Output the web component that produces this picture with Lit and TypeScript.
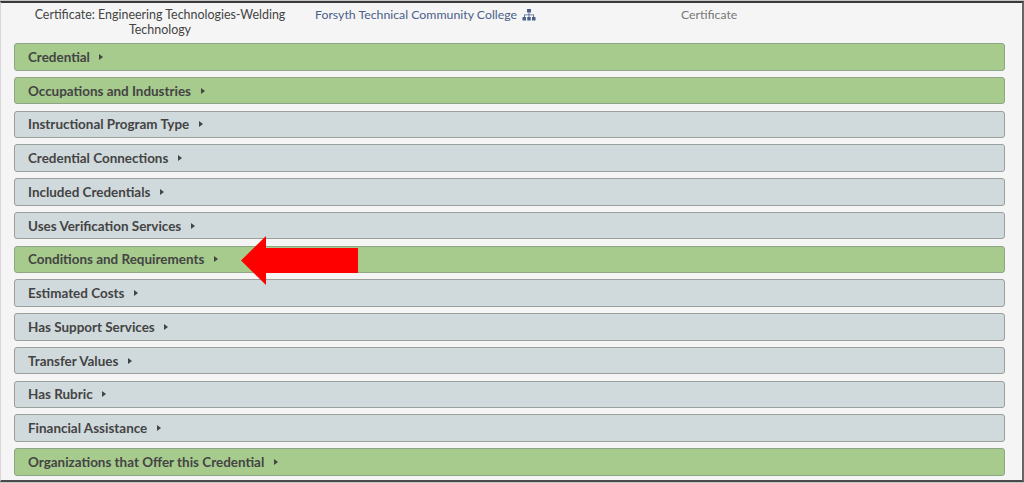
import { LitElement, html, css, svg } from "lit";
import { customElement } from "lit/decorators.js";

const rows: [string, boolean][] = [
  ["Credential", true],
  ["Occupations and Industries", true],
  ["Instructional Program Type", false],
  ["Credential Connections", false],
  ["Included Credentials", false],
  ["Uses Verification Services", false],
  ["Conditions and Requirements", true],
  ["Estimated Costs", false],
  ["Has Support Services", false],
  ["Transfer Values", false],
  ["Has Rubric", false],
  ["Financial Assistance", false],
  ["Organizations that Offer this Credential", true],
];

@customElement("app-root")
export class AppRoot extends LitElement {
  static styles = css`
    :host {
      display: block;
      width: 1024px;
      height: 483px;
      overflow: hidden;
      background: #c4c4c4;
      padding-top: 1px;
      box-sizing: border-box;
      font-family: Lato, "Noto Sans", sans-serif;
    }
    .frame {
      box-sizing: border-box;
      position: relative;
      width: 1024px;
      height: 481px;
      background: #f5f5f5;
      border-top: 2.5px solid #3a3a3a;
      border-bottom: 2px solid #4a4a4a;
      border-left: 1px solid #d8d8d8;
      border-right: 2px solid #666;
      padding: 0 17px 0 13px;
      display: flex;
      flex-direction: column;
    }
    .head {
      display: grid;
      grid-template-columns: 292px 333px 1fr;
      height: 40.2px;
      font-size: 12.3px;
      line-height: 15px;
      padding-top: 3.5px;
      box-sizing: border-box;
    }
    .title { color: #444; text-align: center; padding: 0 10px; font-size: 12.45px; }
    .org { color: #4a5f8a; padding-left: 9px; display: flex; gap: 5px; align-items: flex-start; }
    .org svg { margin-top: 2px; }
    .kind { color: #777; padding-left: 42px; font-size: 12.25px; }
    .rows { display: flex; flex-direction: column; gap: 6.25px; }
    .row {
      box-sizing: border-box;
      height: 27.5px;
      border: 1px solid #9a9f9c;
      border-radius: 3px;
      padding-left: 13px;
      display: flex;
      align-items: center;
      gap: 9.5px;
      font-size: 13.45px;
      font-weight: 700;
      color: #444;
      background: #d0d9dc;
    }
    .row.on { background: #a6cb8d; border-color: #8fa588; }
    .caret { width: 4px; height: 6px; flex: none; }
    .arrow { position: absolute; left: 240px; top: 232.5px; }
  `;

  render() {
    return html`<div class="frame">
      <div class="head">
        <div class="title">Certificate: Engineering Technologies-Welding Technology</div>
        <div class="org">
          <span>Forsyth Technical Community College</span>
          <svg width="14" height="12" viewBox="0 0 14 12" fill="#4a5f8a">
            <rect x="5" y="0" width="4" height="3.5"></rect>
            <rect x="0.5" y="8" width="3.5" height="3.5"></rect>
            <rect x="5.25" y="8" width="3.5" height="3.5"></rect>
            <rect x="10" y="8" width="3.5" height="3.5"></rect>
            <path d="M6.6 3.5h.8v2h4.6v2.5h-.8V6.2H7.4V8h-.8V6.2H2.8V8H2V5.5h4.6z"></path>
          </svg>
        </div>
        <div class="kind">Certificate</div>
      </div>
      <div class="rows">
        ${rows.map(
          ([label, on]) => html`<div class="row ${on ? "on" : ""}">
            <span>${label}</span>
            <svg class="caret" viewBox="0 0 4 6">${svg`<path d="M0 0l4 3-4 3z" fill="#444"></path>`}</svg>
          </div>`
        )}
      </div>
      <svg class="arrow" width="118" height="50" viewBox="0 0 118 50">
        <path d="M0 24.5L25 0V12H117V37H25V49Z" fill="#ff0000"></path>
      </svg>
    </div>`;
  }
}
